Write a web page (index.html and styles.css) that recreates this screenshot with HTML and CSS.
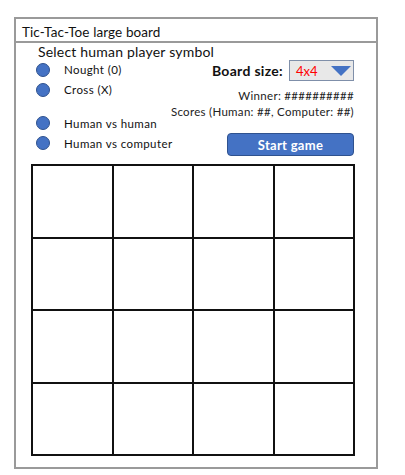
FILE: index.html
```html
<!DOCTYPE html>
<html>
<head>
<meta charset="utf-8">
<link rel="stylesheet" href="styles.css">
</head>
<body>
<div class="frame">
  <div class="titlebar">Tic-Tac-Toe large board</div>
  <div class="content">
    <div class="controls">
      <div class="left">
        <div class="heading">Select human player symbol</div>
        <div class="radio r1"><span class="dot"></span><span>Nought (0)</span></div>
        <div class="radio r2"><span class="dot"></span><span>Cross (X)</span></div>
        <div class="radio r3"><span class="dot"></span><span>Human vs human</span></div>
        <div class="radio r4"><span class="dot"></span><span>Human vs computer</span></div>
      </div>
      <div class="right">
        <div class="size-row">
          <span class="size-label">Board size:</span>
          <div class="select"><span class="sel-val">4x4</span>
            <svg class="tri" width="20" height="10" viewBox="0 0 20 10"><polygon points="0,0 20,0 10,10" fill="#4472c4"/></svg>
          </div>
        </div>
        <div class="info winner">Winner: ##########</div>
        <div class="info scores">Scores (Human: ##, Computer: ##)</div>
        <div class="btn">Start game</div>
      </div>
    </div>
    <div class="board">
      <div class="cell"></div><div class="cell"></div><div class="cell"></div><div class="cell"></div>
      <div class="cell"></div><div class="cell"></div><div class="cell"></div><div class="cell"></div>
      <div class="cell"></div><div class="cell"></div><div class="cell"></div><div class="cell"></div>
      <div class="cell"></div><div class="cell"></div><div class="cell"></div><div class="cell"></div>
    </div>
  </div>
</div>
</body>
</html>
```
FILE: styles.css
```css
html, body { margin: 0; padding: 0; background: #fff; }
body { font-family: Lato, "Open Sans", sans-serif; color: #111; }
.frame {
  position: relative;
  margin: 17px 0 0 14px;
  width: 360px;
  height: 448px;
  border: 2px solid #9a9a9a;
  box-sizing: content-box;
}
.titlebar {
  height: 24px;
  box-sizing: border-box;
  border-bottom: 2px solid #9a9a9a;
  padding: 5px 0 0 6px;
  font-size: 13.5px;
  line-height: 16px;
  letter-spacing: 0.1px;
}
.content { padding: 0 0 0 15px; }
.controls { display: flex; height: 115px; }
.left { width: 130px; flex: none; }
.heading { font-size: 14px; line-height: 16px; margin: 1px 0 0 7px; white-space: nowrap; letter-spacing: 0.2px; }
.radio { display: flex; align-items: center; font-size: 11.5px; line-height: 13px; height: 14px; white-space: nowrap; letter-spacing: 0.4px; }
.dot { width: 14px; height: 14px; border-radius: 50%; background: #4472c4; border: 1px solid #2f528f; box-sizing: border-box; margin: 0 14px 0 5px; flex: none; }
.r1 { margin-top: 3px; }
.r1 span:last-child { margin-top: -2px; }
.r2 { margin-top: 6px; }
.r2 span:last-child { margin-top: -2px; }
.r3 { margin-top: 19px; }
.r4 { margin-top: 6px; }
.right { flex: 1; min-width: 0; display: flex; flex-direction: column; align-items: flex-end; padding-right: 22px; }
.size-row { display: flex; align-items: center; margin-top: 17px; }
.size-label { font-weight: bold; font-size: 14px; margin-right: 6px; letter-spacing: 0.3px; }
.select { width: 65px; height: 21px; box-sizing: border-box; border: 1px solid #7f8fa9; background: #e8e8e8; display: flex; align-items: center; justify-content: space-between; padding: 0 2px 0 6px; }
.sel-val { color: #ff0000; font-size: 13px; }
.tri { margin-top: 1px; }
.info { font-size: 11.5px; line-height: 13px; color: #222; white-space: nowrap; letter-spacing: 0.3px; }
.winner { margin-top: 8px; }
.scores { margin-top: 3px; }
.btn { margin-top: 15px; width: 127px; height: 23px; box-sizing: border-box; background: #4472c4; border: 1px solid #2f528f; border-radius: 4px; color: #fff; font-weight: bold; font-size: 13px; letter-spacing: 0.3px; display: flex; align-items: center; justify-content: center; }
.board {
  margin-top: 6px;
  width: 324px;
  height: 292px;
  box-sizing: border-box;
  display: grid;
  grid-template-columns: repeat(4, 1fr);
  grid-template-rows: repeat(4, 1fr);
  border: 1px solid #111;
  background: #fff;
}
.cell { border: 1px solid #111; }
```
